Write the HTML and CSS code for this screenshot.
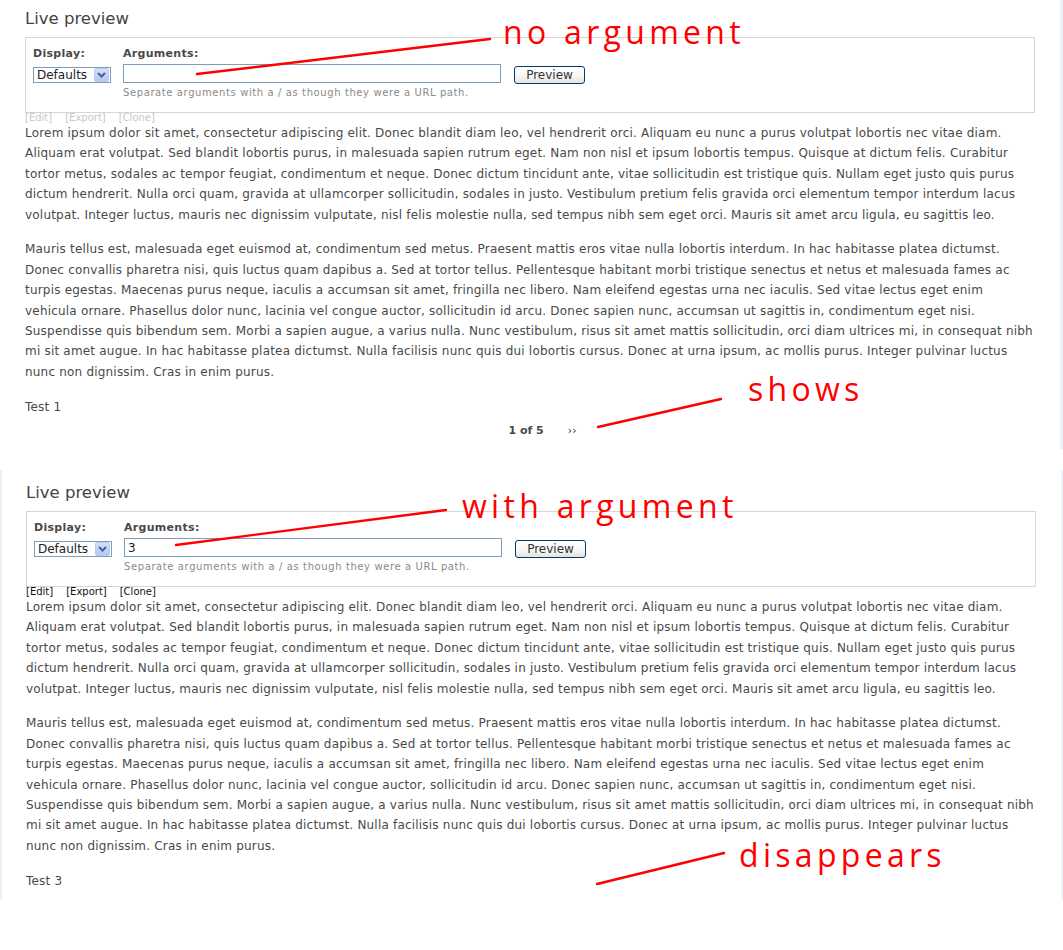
FILE: index.html
```html
<!DOCTYPE html>
<html lang="en">
<head>
<meta charset="utf-8">
<title>Live preview</title>
<link rel="stylesheet" href="styles.css">
</head>
<body>
<div class="page">

  <section class="shot shot-first">
    <h2 class="title">Live preview</h2>
    <form class="preview-form">
      <div class="field field-display">
        <label class="label">Display:</label>
        <div class="select">
          <span class="select-value">Defaults</span>
          <span class="select-arrow"><svg width="9" height="6" viewBox="0 0 9 6"><path d="M1 1 L4.5 4.5 L8 1" fill="none" stroke="#4d6185" stroke-width="2"/></svg></span>
        </div>
      </div>
      <div class="field field-args">
        <label class="label">Arguments:</label>
        <input class="text-input" type="text" value="">
        <div class="description">Separate arguments with a / as though they were a URL path.</div>
      </div>
      <button class="btn" type="button">Preview</button>
    </form>
    <div class="links links-muted"><a>[Edit]</a><a>[Export]</a><a>[Clone]</a></div>
    <div class="view-content">
      <p>Lorem ipsum dolor sit amet, consectetur adipiscing elit. Donec blandit diam leo, vel hendrerit orci. Aliquam eu nunc a purus volutpat lobortis nec vitae diam.<br>Aliquam erat volutpat. Sed blandit lobortis purus, in malesuada sapien rutrum eget. Nam non nisl et ipsum lobortis tempus. Quisque at dictum felis. Curabitur<br>tortor metus, sodales ac tempor feugiat, condimentum et neque. Donec dictum tincidunt ante, vitae sollicitudin est tristique quis. Nullam eget justo quis purus<br>dictum hendrerit. Nulla orci quam, gravida at ullamcorper sollicitudin, sodales in justo. Vestibulum pretium felis gravida orci elementum tempor interdum lacus<br>volutpat. Integer luctus, mauris nec dignissim vulputate, nisl felis molestie nulla, sed tempus nibh sem eget orci. Mauris sit amet arcu ligula, eu sagittis leo.</p>
      <p>Mauris tellus est, malesuada eget euismod at, condimentum sed metus. Praesent mattis eros vitae nulla lobortis interdum. In hac habitasse platea dictumst.<br>Donec convallis pharetra nisi, quis luctus quam dapibus a. Sed at tortor tellus. Pellentesque habitant morbi tristique senectus et netus et malesuada fames ac<br>turpis egestas. Maecenas purus neque, iaculis a accumsan sit amet, fringilla nec libero. Nam eleifend egestas urna nec iaculis. Sed vitae lectus eget enim<br>vehicula ornare. Phasellus dolor nunc, lacinia vel congue auctor, sollicitudin id arcu. Donec sapien nunc, accumsan ut sagittis in, condimentum eget nisi.<br>Suspendisse quis bibendum sem. Morbi a sapien augue, a varius nulla. Nunc vestibulum, risus sit amet mattis sollicitudin, orci diam ultrices mi, in consequat nibh<br>mi sit amet augue. In hac habitasse platea dictumst. Nulla facilisis nunc quis dui lobortis cursus. Donec at urna ipsum, ac mollis purus. Integer pulvinar luctus<br>nunc non dignissim. Cras in enim purus.</p>
      <p>Test 1</p>
    </div>
    <div class="pager"><span class="pager-current">1 of 5</span><span class="pager-next">&rsaquo;&rsaquo;</span></div>
  </section>

  <section class="shot shot-second">
    <h2 class="title">Live preview</h2>
    <form class="preview-form">
      <div class="field field-display">
        <label class="label">Display:</label>
        <div class="select">
          <span class="select-value">Defaults</span>
          <span class="select-arrow"><svg width="9" height="6" viewBox="0 0 9 6"><path d="M1 1 L4.5 4.5 L8 1" fill="none" stroke="#4d6185" stroke-width="2"/></svg></span>
        </div>
      </div>
      <div class="field field-args">
        <label class="label">Arguments:</label>
        <input class="text-input" type="text" value="3">
        <div class="description">Separate arguments with a / as though they were a URL path.</div>
      </div>
      <button class="btn" type="button">Preview</button>
    </form>
    <div class="links links-active"><a>[Edit]</a><a>[Export]</a><a>[Clone]</a></div>
    <div class="view-content">
      <p>Lorem ipsum dolor sit amet, consectetur adipiscing elit. Donec blandit diam leo, vel hendrerit orci. Aliquam eu nunc a purus volutpat lobortis nec vitae diam.<br>Aliquam erat volutpat. Sed blandit lobortis purus, in malesuada sapien rutrum eget. Nam non nisl et ipsum lobortis tempus. Quisque at dictum felis. Curabitur<br>tortor metus, sodales ac tempor feugiat, condimentum et neque. Donec dictum tincidunt ante, vitae sollicitudin est tristique quis. Nullam eget justo quis purus<br>dictum hendrerit. Nulla orci quam, gravida at ullamcorper sollicitudin, sodales in justo. Vestibulum pretium felis gravida orci elementum tempor interdum lacus<br>volutpat. Integer luctus, mauris nec dignissim vulputate, nisl felis molestie nulla, sed tempus nibh sem eget orci. Mauris sit amet arcu ligula, eu sagittis leo.</p>
      <p>Mauris tellus est, malesuada eget euismod at, condimentum sed metus. Praesent mattis eros vitae nulla lobortis interdum. In hac habitasse platea dictumst.<br>Donec convallis pharetra nisi, quis luctus quam dapibus a. Sed at tortor tellus. Pellentesque habitant morbi tristique senectus et netus et malesuada fames ac<br>turpis egestas. Maecenas purus neque, iaculis a accumsan sit amet, fringilla nec libero. Nam eleifend egestas urna nec iaculis. Sed vitae lectus eget enim<br>vehicula ornare. Phasellus dolor nunc, lacinia vel congue auctor, sollicitudin id arcu. Donec sapien nunc, accumsan ut sagittis in, condimentum eget nisi.<br>Suspendisse quis bibendum sem. Morbi a sapien augue, a varius nulla. Nunc vestibulum, risus sit amet mattis sollicitudin, orci diam ultrices mi, in consequat nibh<br>mi sit amet augue. In hac habitasse platea dictumst. Nulla facilisis nunc quis dui lobortis cursus. Donec at urna ipsum, ac mollis purus. Integer pulvinar luctus<br>nunc non dignissim. Cras in enim purus.</p>
      <p>Test 3</p>
    </div>
  </section>

  <svg class="annotations" width="1063" height="950" viewBox="0 0 1063 950">
    <g stroke="#ff0000" stroke-width="2.4" stroke-linecap="round">
      <line x1="197" y1="74" x2="490" y2="39"/>
      <line x1="598" y1="427" x2="721" y2="399"/>
      <line x1="176" y1="545" x2="446" y2="510"/>
      <line x1="597" y1="884" x2="724" y2="853"/>
    </g>
    <g class="note">
      <text x="503" y="44">no argument</text>
      <text x="748" y="401">shows</text>
      <text x="462" y="518">with argument</text>
      <text x="739" y="867">disappears</text>
    </g>
  </svg>

</div>
</body>
</html>
```

FILE: styles.css
```css
* {
  box-sizing: border-box;
}

body {
  margin: 0;
  background: #ffffff;
  font-family: "DejaVu Sans", Verdana, sans-serif;
  color: #494949;
}

.page {
  position: relative;
  width: 1063px;
  height: 950px;
}

.shot {
  display: flex;
  flex-direction: column;
}

.shot-first {
  height: 449px;
  padding: 9px 25px 0 25px;
  border-right: 3px solid #e8f0fa;
}

.shot-second {
  height: 430px;
  margin-top: 21px;
  padding: 13px 25px 0 24px;
  border-left: 2px solid #e8f0fa;
  border-right: 2px solid #eef3fa;
}

.title {
  margin: 0 0 8px 0;
  font-size: 16.5px;
  line-height: 20px;
  font-weight: normal;
  color: #444444;
}

.preview-form {
  display: flex;
  align-items: flex-start;
  margin: 0;
  padding: 9px 7px 13px 7px;
  border: 1px solid #d6d6d6;
}

.field {
  display: flex;
  flex-direction: column;
}

.field-display {
  width: 78px;
}

.field-args {
  margin-left: 12px;
  width: 378px;
}

.label {
  font-size: 11px;
  line-height: 14px;
  font-weight: bold;
  letter-spacing: 0.3px;
  color: #494949;
  margin-bottom: 3px;
}

.select {
  display: flex;
  align-items: center;
  justify-content: space-between;
  margin-top: 3px;
  height: 16px;
  width: 78px;
  padding: 0 1px 0 3px;
  border: 1px solid #7f9db9;
  background: #ffffff;
}

.select-value {
  font-size: 12px;
  line-height: 14px;
  color: #222222;
}

.select-arrow {
  display: flex;
  align-items: center;
  justify-content: center;
  width: 15px;
  height: 14px;
  border: 1px solid #b8cbf5;
  border-radius: 2px;
  background: linear-gradient(#d2e0fd, #b2c8f6);
}

.text-input {
  width: 378px;
  height: 19px;
  margin: 0;
  padding: 0 3px;
  border: 1px solid #7f9db9;
  font-family: "DejaVu Sans", Verdana, sans-serif;
  font-size: 12px;
  color: #222222;
  background: #ffffff;
  outline: none;
}

.description {
  margin-top: 3px;
  font-size: 10px;
  line-height: 13px;
  letter-spacing: 0.6px;
  color: #8a8a8a;
  white-space: nowrap;
}

.btn {
  margin: 19px 0 0 13px;
  width: 71px;
  height: 18px;
  padding: 0;
  border: 1px solid #003c74;
  border-radius: 3px;
  background: linear-gradient(#ffffff 0%, #f6f6f3 60%, #e3e2da 100%);
  font-family: "DejaVu Sans", Verdana, sans-serif;
  font-size: 12px;
  line-height: 16px;
  color: #333333;
}

.links {
  display: flex;
  gap: 13px;
  font-size: 10px;
  line-height: 10px;
}

.links-muted {
  color: #c8c8c8;
}

.links-active {
  color: #111111;
}

.view-content p {
  margin: 0 0 14.4px 0;
  font-size: 12px;
  line-height: 20.4px;
  letter-spacing: 0.2px;
  white-space: nowrap;
}

.view-content p:last-child {
  margin-bottom: 0;
}

.pager {
  display: flex;
  justify-content: center;
  gap: 24px;
  margin-top: 7px;
  padding-left: 25px;
  font-size: 11px;
  line-height: 14px;
}

.pager-current {
  font-weight: bold;
}

.pager-next {
  color: #333333;
}

.annotations {
  position: absolute;
  top: 0;
  left: 0;
  pointer-events: none;
}

.note text {
  font-family: "Open Sans", "Noto Sans", sans-serif;
  font-size: 32px;
  letter-spacing: 4.3px;
  word-spacing: 1px;
  fill: #ff0000;
}
```
